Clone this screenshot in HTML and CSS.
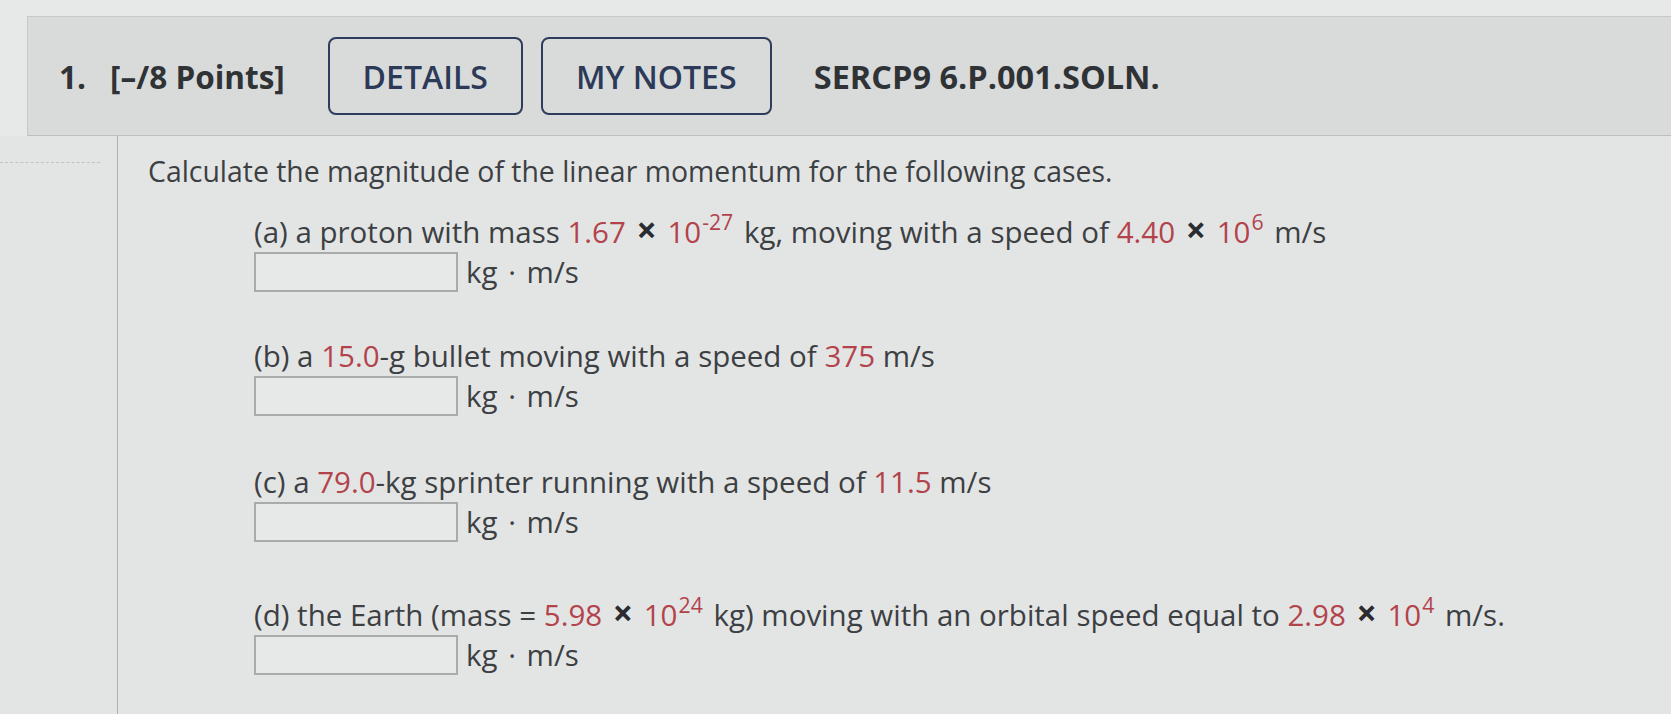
FILE: index.html
```html
<!DOCTYPE html>
<html lang="en">
<head>
<meta charset="utf-8">
<title>SERCP9 6.P.001.SOLN.</title>
<link rel="stylesheet" href="styles.css">
</head>
<body>
<div class="page">
  <div class="header">
    <span class="qnum"><span class="qnum-n">1.</span><span class="qnum-pts">[–/8 Points]</span></span>
    <button class="btn btn-details">DETAILS</button>
    <button class="btn btn-notes">MY NOTES</button>
    <span class="code">SERCP9 6.P.001.SOLN.</span>
  </div>
  <div class="main">
    <div class="gutter"><div class="gutter-mark"></div></div>
    <div class="content">
      <p class="intro">Calculate the magnitude of the linear momentum for the following cases.</p>

      <div class="part part-a">
        <div class="part-text">(a) a proton with mass <span class="num">1.67</span> <span class="times">×</span> <span class="num">10<sup>-27</sup></span> kg, moving with a speed of <span class="num">4.40</span> <span class="times">×</span> <span class="num">10<sup>6</sup></span> m/s</div>
        <div class="answer"><span class="box"></span><span class="unit">kg · m/s</span></div>
      </div>

      <div class="part part-b">
        <div class="part-text">(b) a <span class="num">15.0</span>-g bullet moving with a speed of <span class="num">375</span> m/s</div>
        <div class="answer"><span class="box"></span><span class="unit">kg · m/s</span></div>
      </div>

      <div class="part part-c">
        <div class="part-text">(c) a <span class="num">79.0</span>-kg sprinter running with a speed of <span class="num">11.5</span> m/s</div>
        <div class="answer"><span class="box"></span><span class="unit">kg · m/s</span></div>
      </div>

      <div class="part part-d">
        <div class="part-text">(d) the Earth (mass = <span class="num">5.98</span> <span class="times">×</span> <span class="num">10<sup>24</sup></span> kg) moving with an orbital speed equal to <span class="num">2.98</span> <span class="times">×</span> <span class="num">10<sup>4</sup></span> m/s.</div>
        <div class="answer"><span class="box"></span><span class="unit">kg · m/s</span></div>
      </div>
    </div>
  </div>
</div>
</body>
</html>
```

FILE: styles.css
```css
html, body {
  margin: 0;
  padding: 0;
}

body {
  background: #e7e9e9;
  font-family: "Open Sans", "Noto Sans", sans-serif;
  color: #3d4043;
  width: 1671px;
  height: 714px;
  overflow: hidden;
}

.page {
  padding-top: 16px;
}

.header {
  margin-left: 27px;
  height: 120px;
  box-sizing: border-box;
  background: #d9dbdb;
  border-top: 1px solid #c6c9c9;
  border-bottom: 1px solid #bcbfbf;
  border-left: 1px solid #c6c9c9;
  display: flex;
  align-items: center;
  padding-left: 31px;
}

.qnum {
  font-weight: 700;
  font-size: 31.5px;
  color: #303336;
  margin-right: 43px;
  white-space: nowrap;
  display: flex;
}

.qnum-n {
  margin-right: 24px;
}

.btn {
  font-family: "Open Sans", "Noto Sans", sans-serif;
  font-size: 32px;
  font-weight: 600;
  color: #2c3a58;
  background: transparent;
  border: 2px solid #2e3d5c;
  border-radius: 8px;
  height: 78px;
  padding: 0;
  margin-right: 18px;
  flex: none;
}

.btn-details {
  width: 195px;
}

.btn-notes {
  width: 231px;
}

.code {
  font-weight: 700;
  font-size: 32.5px;
  color: #303336;
  margin-left: 24px;
  white-space: nowrap;
}

.main {
  display: flex;
  height: 578px;
}

.gutter {
  width: 118px;
  flex: none;
  background: #e3e5e5;
  border-right: 1px solid #adb0b0;
  padding-top: 26px;
  box-sizing: border-box;
}

.gutter-mark {
  width: 100px;
  border-top: 1px dashed #c0c3c3;
}

.content {
  flex: 1;
  padding-left: 30px;
  padding-top: 18px;
  font-size: 28.4px;
  background: #e3e5e5;
}

.intro {
  margin: 0;
  line-height: 34px;
  white-space: nowrap;
}

.part {
  margin-left: 106px;
  font-size: 29.5px;
}

.part-a {
  margin-top: 24px;
}

.part-b {
  margin-top: 47px;
}

.part-c {
  margin-top: 49px;
}

.part-d {
  margin-top: 53px;
}

.part-text {
  line-height: 34px;
  white-space: nowrap;
}

.num {
  color: #b3434b;
}

.times {
  color: #2a2c2f;
  font-weight: 700;
  font-size: 1.2em;
  margin: 0 3px;
}

sup {
  font-size: 0.72em;
  line-height: 0;
  vertical-align: 0.62em;
  margin-left: 1px;
  margin-right: 3px;
}

.answer {
  display: flex;
  align-items: center;
  height: 40px;
  margin-top: 3px;
}

.box {
  width: 204px;
  height: 40px;
  box-sizing: border-box;
  border: 2px solid #a8abac;
  background: #e7e9e9;
  flex: none;
}

.unit {
  margin-left: 8px;
  line-height: 36px;
  word-spacing: 3px;
}
```
